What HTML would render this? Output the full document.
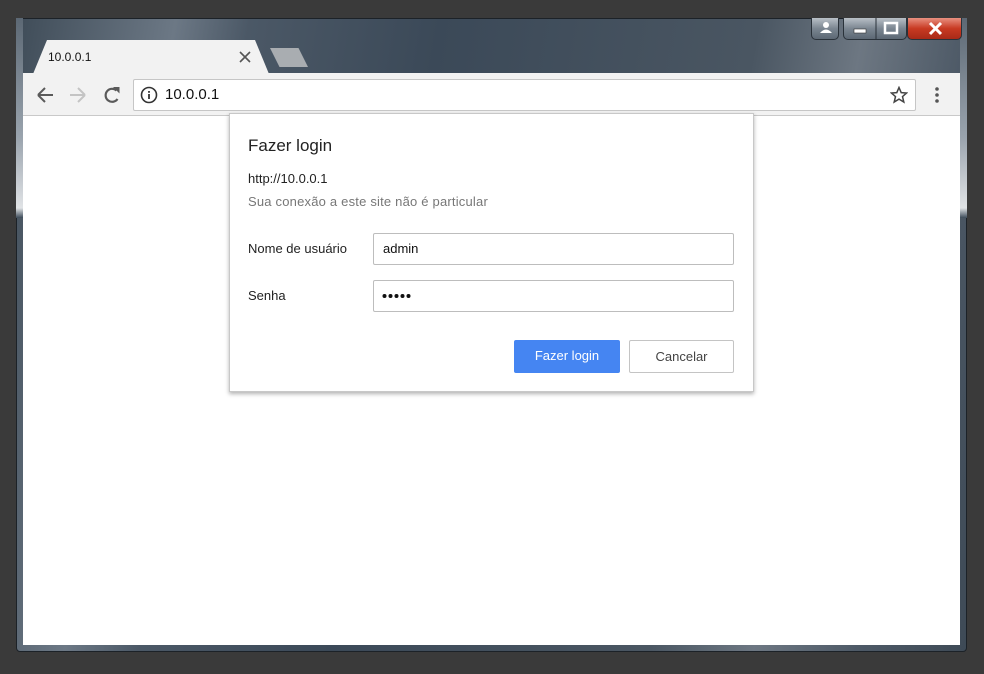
<!DOCTYPE html>
<html><head><meta charset="utf-8"><style>
*{margin:0;padding:0;box-sizing:border-box}
body{width:984px;height:674px;background:#3a3a3a;position:relative;overflow:hidden;font-family:"Liberation Sans",sans-serif}
.win{position:absolute;left:16px;top:18px;width:951px;height:634px;border-radius:7px 7px 4px 4px;border:1px solid #1c2228;
background:linear-gradient(100deg,#3f4c58 0%,#6c7885 15%,#4b5866 22%,#3b4958 40%,#4a5662 70%,#6d7782 80%,#4d5966 90%,#3e4a56 100%);}
.side{position:absolute;top:0;width:7px;height:200px;background:linear-gradient(#5c6874,#9aa4ae 60%,#e0e3e6 95%,#3c4a58 100%)}
.content{position:absolute;left:23px;top:116px;width:937px;height:529px;background:#fff}
.toolbar{position:absolute;left:23px;top:73px;width:937px;height:43px;background:#f2f2f2;border-bottom:1px solid #c9c9c9}
.tab{position:absolute;left:33px;top:40px;width:236px;height:34px;background:#f2f2f2;clip-path:polygon(0 100%,14px 0,calc(100% - 14px) 0,100% 100%)}
.tab2{position:absolute;left:270px;top:48px;width:38px;height:19px;background:#a9adb1;clip-path:polygon(0 0,75% 0,100% 100%,25% 100%)}
.omni{position:absolute;left:133px;top:79px;width:783px;height:32px;background:#fff;border:1px solid #c6c6c6;border-radius:2px}
.dlg{position:absolute;left:229px;top:113px;width:525px;height:279px;background:#fff;border:1px solid #c8c8c8;box-shadow:0 2px 4px rgba(0,0,0,.3)}
.t{position:absolute;font-size:13px;color:#222;white-space:nowrap}
.inp{position:absolute;left:373px;width:361px;height:32px;border:1px solid #bdbdbd;border-radius:2px;background:#fff}
.btn{position:absolute;top:340px;height:33px;border-radius:2px;font-size:13px;text-align:center;line-height:32px}
.wb{position:absolute;top:18px;height:22px;border:1px solid #2a323a;border-top:none;border-radius:0 0 5px 5px;background:linear-gradient(#b9c0c7,#7b8691 50%,#5c6874)}
</style></head><body>
<div class="win"></div>
<div class="side" style="left:16px;top:18px"></div>
<div class="side" style="left:960px;top:18px"></div>
<div class="wb" style="left:811px;width:28px"><svg width="28" height="22"><circle cx="14" cy="7" r="3" fill="#fff"/><path d="M8 15 Q14 8 20 15Z" fill="#fff"/></svg></div>
<div class="wb" style="left:843px;width:64px"><svg width="64" height="22"><rect x="10" y="11" width="12" height="4" fill="#fff" stroke="#333" stroke-width=".6"/><line x1="32" y1="0" x2="32" y2="22" stroke="#2a323a"/><rect x="41" y="5" width="12" height="10" fill="none" stroke="#fff" stroke-width="2.5"/></svg></div>
<div class="wb" style="left:907px;width:55px;background:linear-gradient(#e89080,#c83a22 50%,#a82a18)"><svg width="55" height="22"><path d="M22 5 L33 16 M33 5 L22 16" stroke="#fff" stroke-width="3"/></svg></div>
<div class="tab"></div><div class="tab2"></div>
<div class="t" style="left:48px;top:50px;font-size:12px;color:#111">10.0.0.1</div>
<svg style="position:absolute;left:239px;top:51px" width="12" height="12"><path d="M1 1L11 11M11 1L1 11" stroke="#555" stroke-width="1.6"/></svg>
<div class="toolbar"></div>
<svg style="position:absolute;left:34px;top:84px" width="100" height="22">
<path d="M4 11H19M4 11L11 4M4 11L11 18" stroke="#5a5a5a" stroke-width="2" fill="none"/>
<path d="M36 11H51M51 11L44 4M51 11L44 18" stroke="#c4c4c4" stroke-width="2" fill="none"/>
<path d="M82.5 6.5 A6.5 6.5 0 1 0 83.5 15" stroke="#5a5a5a" stroke-width="2.2" fill="none"/><path d="M79 3H85.5V9.5Z" fill="#5a5a5a"/></svg>
<div class="omni"></div>
<svg style="position:absolute;left:140px;top:86px" width="18" height="18"><circle cx="9" cy="9" r="7.5" fill="none" stroke="#333" stroke-width="1.6"/><rect x="8.1" y="8" width="1.8" height="5" fill="#333"/><rect x="8.1" y="5" width="1.8" height="1.8" fill="#333"/></svg>
<div class="t" style="left:165px;top:86px;font-size:15px;color:#111">10.0.0.1</div>
<svg style="position:absolute;left:890px;top:86px" width="18" height="18"><path d="M9 1.5L11.2 6.6 16.6 7 12.5 10.6 13.8 16 9 13.1 4.2 16 5.5 10.6 1.4 7 6.8 6.6Z" fill="none" stroke="#444" stroke-width="1.5"/></svg>
<svg style="position:absolute;left:934px;top:86px" width="6" height="18"><circle cx="3" cy="3" r="1.8" fill="#555"/><circle cx="3" cy="9" r="1.8" fill="#555"/><circle cx="3" cy="15" r="1.8" fill="#555"/></svg>
<div class="content"></div>
<div class="dlg"></div>
<div class="t" style="left:248px;top:136px;font-size:17px;color:#222">Fazer login</div>
<div class="t" style="left:248px;top:171px;font-size:13px;color:#222">http://10.0.0.1</div>
<div class="t" style="left:248px;top:194px;font-size:13px;color:#777;letter-spacing:.2px">Sua conexão a este site não é particular</div>
<div class="t" style="left:248px;top:241px">Nome de usuário</div>
<div class="t" style="left:248px;top:288px">Senha</div>
<div class="inp" style="top:233px"></div>
<div class="inp" style="top:280px"></div>
<div class="t" style="left:383px;top:241px;color:#111">admin</div>
<svg style="position:absolute;left:382px;top:293px" width="32" height="6"><g fill="#111"><circle cx="2.5" cy="3" r="2"/><circle cx="8.5" cy="3" r="2"/><circle cx="14.5" cy="3" r="2"/><circle cx="20.5" cy="3" r="2"/><circle cx="26.5" cy="3" r="2"/></g></svg>
<div class="btn" style="left:514px;width:106px;background:#4585f2;color:#fff">Fazer login</div>
<div class="btn" style="left:629px;width:105px;border:1px solid #c4c4c4;color:#444">Cancelar</div>
</body></html>
